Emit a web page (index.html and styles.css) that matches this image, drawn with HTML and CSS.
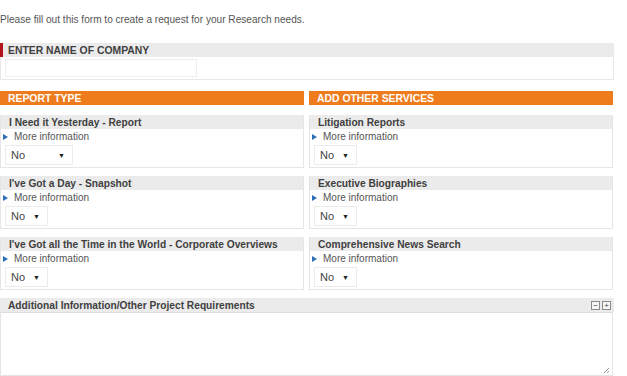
FILE: index.html
```html
<!DOCTYPE html>
<html lang="en">
<head>
    <meta charset="UTF-8">
    <title>Research Request</title>
    <link rel="stylesheet" href="styles.css">
</head>
<body>
    <div class="page">
        <p class="intro">Please fill out this form to create a request for your Research needs.</p>

        <!-- Company -->
        <div class="company">
            <div class="box-head required">ENTER NAME OF COMPANY</div>
            <div class="company-body">
                <div class="text-input"></div>
            </div>
        </div>

        <!-- Two columns of services -->
        <div class="columns">
            <div class="column">
                <div class="band">REPORT TYPE</div>

                <div class="box">
                    <div class="box-head">I Need it Yesterday - Report</div>
                    <div class="more"><span class="arrow"></span>More information</div>
                    <div class="select wide">No<span class="caret">&#9660;</span></div>
                </div>

                <div class="box">
                    <div class="box-head">I've Got a Day - Snapshot</div>
                    <div class="more"><span class="arrow"></span>More information</div>
                    <div class="select">No<span class="caret">&#9660;</span></div>
                </div>

                <div class="box">
                    <div class="box-head">I've Got all the Time in the World - Corporate Overviews</div>
                    <div class="more"><span class="arrow"></span>More information</div>
                    <div class="select">No<span class="caret">&#9660;</span></div>
                </div>
            </div>

            <div class="column">
                <div class="band">ADD OTHER SERVICES</div>

                <div class="box">
                    <div class="box-head">Litigation Reports</div>
                    <div class="more"><span class="arrow"></span>More information</div>
                    <div class="select">No<span class="caret">&#9660;</span></div>
                </div>

                <div class="box">
                    <div class="box-head">Executive Biographies</div>
                    <div class="more"><span class="arrow"></span>More information</div>
                    <div class="select">No<span class="caret">&#9660;</span></div>
                </div>

                <div class="box">
                    <div class="box-head">Comprehensive News Search</div>
                    <div class="more"><span class="arrow"></span>More information</div>
                    <div class="select">No<span class="caret">&#9660;</span></div>
                </div>
            </div>
        </div>

        <!-- Additional info -->
        <div class="additional">
            <div class="box-head with-tools">
                <span>Additional Information/Other Project Requirements</span>
                <span class="tools">
                    <span class="tool">&minus;</span>
                    <span class="tool">+</span>
                </span>
            </div>
            <div class="textarea">
                <svg class="grip" width="7" height="7" viewBox="0 0 7 7">
                    <path d="M1 6 L6 1 M4 6 L6 4" stroke="#9a9a9a" stroke-width="1" fill="none"/>
                </svg>
            </div>
        </div>
    </div>
</body>
</html>
```

FILE: styles.css
```css
body {
    margin: 0;
    padding: 0;
    background: #ffffff;
    font-family: 'Liberation Sans', Arial, sans-serif;
    color: #444444;
    overflow: hidden;
}

.page {
    width: 614px;
}

.intro {
    margin: 0;
    padding-top: 13px;
    font-size: 10.1px;
    line-height: 14px;
    color: #555555;
}

/* gray heading strip used by every box */
.box-head {
    background: #ebebeb;
    height: 14px;
    line-height: 15px;
    padding-left: 8px;
    font-size: 10.2px;
    font-weight: bold;
    color: #3f3f3f;
    white-space: nowrap;
}

.company {
    margin-top: 16px;
}

.box-head.required {
    border-left: 3px solid #b3141c;
    padding-left: 5px;
    font-size: 10.4px;
}

.company-body {
    border: 1px solid #e8e8e8;
    border-top: none;
    padding: 2px 0 0 4px;
    box-sizing: border-box;
    height: 23px;
}

.text-input {
    width: 192px;
    height: 18px;
    border: 1px solid #eeeeee;
    box-sizing: border-box;
}

.columns {
    display: grid;
    grid-template-columns: 304px 304px;
    column-gap: 5px;
    margin-top: 11px;
}

.band {
    background: #ee7b1c;
    color: #ffffff;
    font-size: 10.4px;
    font-weight: bold;
    height: 14px;
    line-height: 15px;
    padding-left: 8px;
    margin-bottom: 10px;
}

.box {
    border: 1px solid #e6e6e6;
    border-top: none;
    height: 53px;
    box-sizing: border-box;
    margin-bottom: 8px;
}

.more {
    display: flex;
    align-items: center;
    height: 13px;
    font-size: 10px;
    color: #555555;
    margin-top: 1px;
}

.arrow {
    width: 0;
    height: 0;
    border-left: 5px solid #2d6fb7;
    border-top: 3.5px solid transparent;
    border-bottom: 3.5px solid transparent;
    margin: 0 6px 0 2px;
}

.select {
    display: flex;
    justify-content: space-between;
    align-items: center;
    width: 43px;
    height: 20px;
    margin: 2px 0 0 4px;
    padding: 0 7px 0 5px;
    box-sizing: border-box;
    border: 1px solid #ececec;
    font-size: 11px;
    color: #444444;
}

.select.wide {
    width: 68px;
}

.caret {
    font-size: 7px;
    color: #222222;
}

.box-head.with-tools {
    display: flex;
    justify-content: space-between;
    align-items: center;
    padding-right: 3px;
}

.tools {
    display: flex;
    gap: 2px;
}

.tool {
    width: 7px;
    height: 7px;
    border: 1px solid #8a8a8a;
    background: #f6f6f6;
    font-size: 8px;
    line-height: 7px;
    text-align: center;
    color: #444444;
    font-weight: normal;
}

.textarea {
    position: relative;
    height: 64px;
    border: 1px solid #e4e4e4;
    border-top: 1px solid #dddddd;
    box-sizing: border-box;
    margin-right: 1px;
}

.grip {
    position: absolute;
    right: 2px;
    bottom: 1px;
}
```
